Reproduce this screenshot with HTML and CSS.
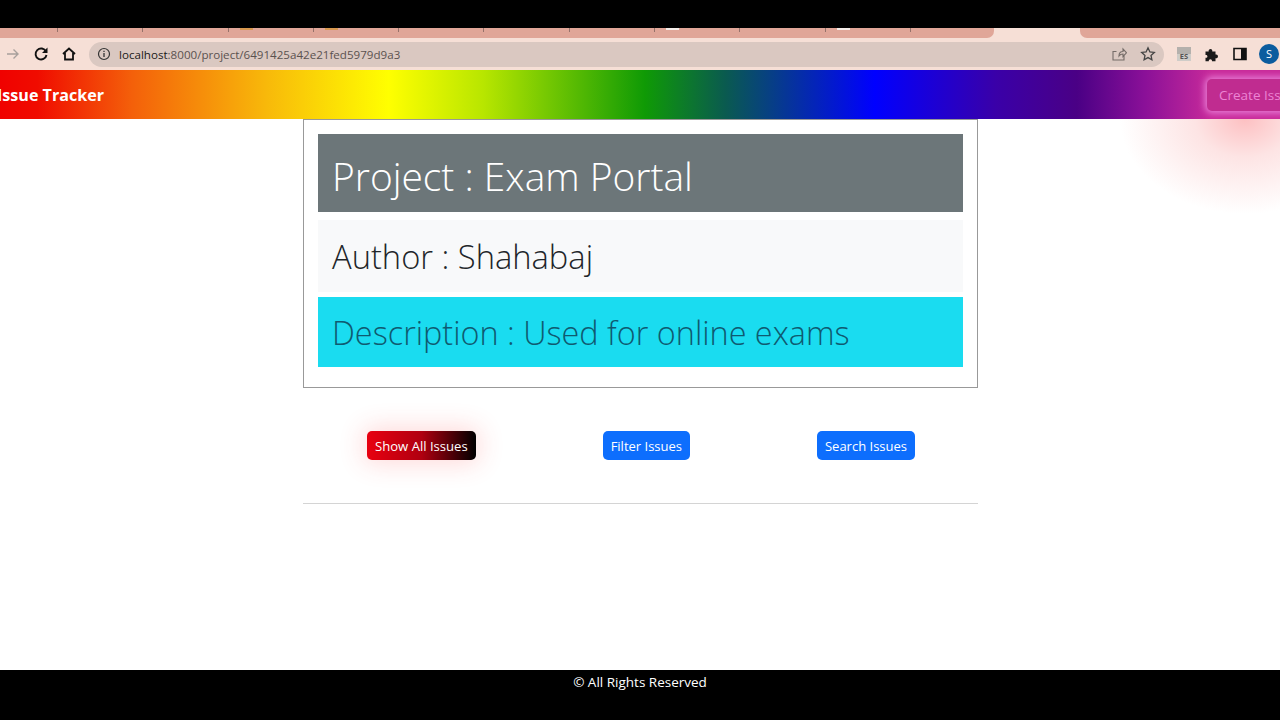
FILE: index.html
```html
<!DOCTYPE html>
<html lang="en">
<head>
    <meta charset="UTF-8">
    <meta name="viewport" content="width=device-width, initial-scale=1.0">
    <title>Issue Tracker</title>
    <link rel="stylesheet" href="styles.css">
</head>
<body>
    <div class="topbar"></div>
    <div class="tabs">
        <div class="tab first"></div>
        <div class="tab"></div>
        <div class="tab"></div>
        <div class="tab"><span class="fav orange"></span></div>
        <div class="tab"><span class="fav orange"></span></div>
        <div class="tab"></div>
        <div class="tab"></div>
        <div class="tab"></div>
        <div class="tab"><span class="fav light"></span></div>
        <div class="tab"></div>
        <div class="tab"><span class="fav light"></span></div>
        <div class="tab short"></div>
        <div class="tab active"></div>
        <div class="tab last"></div>
    </div>
    <div class="toolbar">
        <svg class="tool arrow" width="16" height="16" viewBox="0 0 16 16"><path d="M2 8h11M8.500 3.500 13 8l-4.500 4.500" fill="none" stroke="#a8a09c" stroke-width="1.400"/></svg>
        <svg class="tool" width="16" height="16" viewBox="0 0 16 16"><path d="M13 5.500A5.500 5.500 0 1 0 13.500 9" fill="none" stroke="#111" stroke-width="1.900"/><path d="M14.500 1.500v5.500h-5.500z" fill="#111"/></svg>
        <svg class="tool" width="16" height="16" viewBox="0 0 16 16"><path d="M2 8l6-5.500L14 8M4 7v6.500h8V7" fill="none" stroke="#111" stroke-width="1.800"/></svg>
        <div class="urlbar">
            <svg class="info" width="14" height="14" viewBox="0 0 14 14"><circle cx="7" cy="7" r="5.500" fill="none" stroke="#333" stroke-width="1.200"/><path d="M7 6v4M7 3.800v1.200" stroke="#333" stroke-width="1.300"/></svg>
            <span class="url"><span class="host">localhost</span>:8000/project/6491425a42e21fed5979d9a3</span>
            <svg class="share" width="16" height="16" viewBox="0 0 16 16"><path d="M13 9.500V14H2V5.500h3.500M8 10c0-3 2-4.500 4-4.500V3l3.500 3.800L12 10.500V8c-2 0-3 .5-4 2z" fill="none" stroke="#756c68" stroke-width="1.100"/></svg>
            <svg class="star" width="16" height="16" viewBox="0 0 16 16"><path d="M8 1.800l1.900 4.100 4.400.5-3.300 3 .9 4.400L8 11.600l-3.900 2.200.9-4.400-3.300-3 4.400-.5z" fill="none" stroke="#444" stroke-width="1.300"/></svg>
        </div>
        <div class="es">ES</div>
        <svg class="puzzle" width="16" height="16" viewBox="0 0 16 16"><path d="M1.500 5.500h3.200c-.8-3 4-3.600 3.600 0h3.200v3c3-.8 3.600 4.200 0 3.800v3H8c.4-2.800-3.600-2.800-3.200 0H1.500v-3.500c2.600.5 2.600-3.300 0-2.800z" fill="#1a1a1a"/></svg>
        <svg class="panel" width="14" height="14" viewBox="0 0 14 14"><path d="M1 1.500h12v11H1z" fill="none" stroke="#111" stroke-width="1.600"/><path d="M8 1.500h5v11H8z" fill="#111"/></svg>
        <div class="avatar">S</div>
    </div>

    <div class="navbar">
        <a class="brand">Issue Tracker</a>
        <button class="create">Create Issue</button>
    </div>
    <div class="glow"></div>

    <div class="main">
        <div class="project">
            <div class="line gray">Project : Exam Portal</div>
            <div class="line light">Author : Shahabaj</div>
            <div class="line cyan">Description : Used for online exams</div>
        </div>
        <div class="actions">
            <button class="btn current">Show All Issues</button>
            <button class="btn">Filter Issues</button>
            <button class="btn">Search Issues</button>
        </div>
        <hr>
    </div>

    <div class="footer">© All Rights Reserved</div>
</body>
</html>
```

FILE: styles.css
```css
*{
    margin: 0;
    padding: 0;
    box-sizing: border-box;
}
body{
    width: 1280px;
    height: 720px;
    overflow: hidden;
    display: flex;
    flex-direction: column;
    font-family: "Open Sans", "Noto Sans", sans-serif;
    background-color: #fff;
    position: relative;
}
.topbar{
    height: 28px;
    background-color: #000;
}

/* browser tabs */
.tabs{
    height: 10px;
    display: flex;
    background-color: #f6dfd6;
}
.tab{
    width: 85.3px;
    height: 10px;
    flex-shrink: 0;
    background-color: #e0a698;
    background-image: linear-gradient(#96726a, #96726a);
    background-size: 1px 4px;
    background-position: right top;
    background-repeat: no-repeat;
    overflow: hidden;
}
.tab.first{
    width: 58px;
}
.tab.short{
    width: 83px;
    background-image: none;
    border-radius: 0 0 7px 0;
}
.tab.active{
    width: 86px;
    background-color: #f6dfd6;
    background-image: none;
}
.tab.last{
    flex: 1;
    background-image: none;
    border-radius: 0 0 0 7px;
}
.fav{
    display: block;
    width: 13px;
    height: 2px;
    margin-left: 11px;
}
.fav.orange{
    background-color: #d8984f;
}
.fav.light{
    background-color: #f6eeea;
}

/* browser toolbar */
.toolbar{
    height: 32px;
    display: flex;
    align-items: center;
    background-color: #f6dfd6;
    padding-left: 5px;
}
.tool{
    margin-right: 12px;
}
.urlbar{
    width: 1075px;
    height: 25px;
    border-radius: 13px;
    background-color: #dac8c1;
    display: flex;
    align-items: center;
    padding-left: 8px;
}
.url{
    margin-left: 8px;
    font-size: 11.600px;
    color: #5a5250;
    flex: 1;
}
.host{
    color: #1c1a1a;
}
.share{
    margin-right: 13px;
}
.star{
    margin-right: 8px;
}
.es{
    width: 14px;
    height: 14px;
    margin-left: 13px;
    background-image: linear-gradient(#b4b0ac 50%, #cfccc8 50%);
    color: #555;
    font-size: 7.500px;
    font-weight: 700;
    line-height: 19px;
    text-align: center;
    overflow: hidden;
}
.puzzle{
    margin-left: 13px;
}
.panel{
    margin-left: 13px;
}
.avatar{
    width: 20px;
    height: 20px;
    margin-left: 12px;
    border-radius: 50%;
    background-color: #0b5c9e;
    color: #fff;
    font-size: 11px;
    line-height: 20px;
    text-align: center;
}

/* site navbar */
.navbar{
    height: 49px;
    width: 1350px;
    margin-left: -3px;
    flex-shrink: 0;
    display: flex;
    align-items: center;
    justify-content: space-between;
    background-image: linear-gradient(90deg, #f00000 0%, #f00c00 3%, #f4600a 10%, #f8b90a 20%, #ffff00 29%, #b8e600 36%, #0f9a05 48%, #0a5a50 54%, #0000ff 65%, #3a00a8 74%, #4a0085 80%, #8a1098 85%, #c82a9a 90%, #c82a9a 100%);
}
.brand{
    font-size: 16.100px;
    font-weight: 700;
    color: #fff;
}
.create{
    width: 140px;
    height: 32px;
    border: none;
    border-radius: 5px;
    text-align: left;
    padding-left: 12px;
    font-family: inherit;
    font-size: 13.500px;
    color: #ec84d4;
    background-color: #c02c90;
    box-shadow: 0 0 7px 2px #e880d8;
}
.glow{
    position: absolute;
    left: 1120px;
    top: 119px;
    width: 160px;
    height: 100px;
    background-image: radial-gradient(ellipse 125px 95px at 125px 0, #fdc0c2 0%, #fde4e4 40%, #fff 100%);
}

/* project page */
.main{
    flex: 1;
    width: 675px;
    margin: 0 auto;
    position: relative;
    left: 0.500px;
}
.project{
    height: 269px;
    border: 1px solid #999;
    padding: 14px;
}
.line{
    display: flex;
    align-items: center;
    padding-left: 14px;
    font-weight: 300;
    white-space: nowrap;
}
.line.gray{
    height: 78px;
    padding-top: 4px;
    background-color: #6c7679;
    color: #fff;
    font-size: 38.900px;
}
.line.light{
    height: 72px;
    margin-top: 8px;
    background-color: #f8f9fa;
    color: #212529;
    font-size: 32.700px;
}
.line.cyan{
    height: 70px;
    margin-top: 5px;
    background-color: #1adcf0;
    color: #0f5a70;
    font-size: 32.400px;
}
.actions{
    display: flex;
    justify-content: space-between;
    padding: 43px 63px 0 64px;
}
.btn{
    height: 29px;
    padding: 0 8px;
    border: none;
    border-radius: 5px;
    font-family: inherit;
    font-size: 13px;
    color: #fff;
    background-color: #0d6efd;
}
.btn.current{
    font-size: 13.100px;
    background-image: linear-gradient(90deg, #e80010, #b00010 50%, #000);
    box-shadow: 0 0 26px 3px rgba(255, 60, 60, 0.200);
}
hr{
    margin-top: 43px;
    border: none;
    border-top: 1px solid #d4d4d4;
}
.footer{
    height: 50px;
    flex-shrink: 0;
    background-color: #000;
    color: #fff;
    text-align: center;
    font-size: 13.500px;
    line-height: 24px;
}
```
